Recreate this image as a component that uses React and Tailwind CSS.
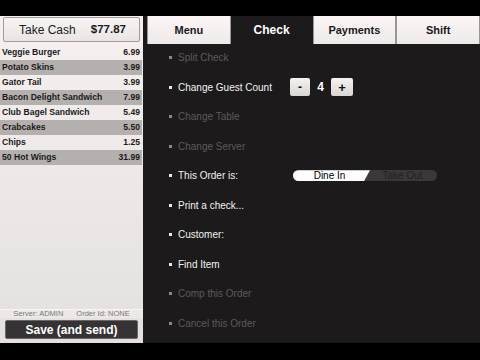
const items = [
  { name: 'Veggie Burger', price: '6.99' },
  { name: 'Potato Skins', price: '3.99' },
  { name: 'Gator Tail', price: '3.99' },
  { name: 'Bacon Delight Sandwich', price: '7.99' },
  { name: 'Club Bagel Sandwich', price: '5.49' },
  { name: 'Crabcakes', price: '5.50' },
  { name: 'Chips', price: '1.25' },
  { name: '50 Hot Wings', price: '31.99' },
];

const actions = [
  { label: 'Split Check', off: true },
  { label: 'Change Guest Count', guests: true },
  { label: 'Change Table', off: true },
  { label: 'Change Server', off: true },
  { label: 'This Order is:', orderType: true },
  { label: 'Print a check...' },
  { label: 'Customer:' },
  { label: 'Find Item' },
  { label: 'Comp this Order', off: true },
  { label: 'Cancel this Order', off: true },
];

function Tab({ label, active }) {
  return (
    <div
      className={
        active
          ? 'flex-1 flex items-center justify-center bg-[#1c1a1a] text-white text-[12px] font-bold'
          : 'flex-1 flex items-center justify-center bg-gradient-to-b from-[#fbf6f5] to-[#efeaea] border-x border-[#9a9696] text-[#1a1a1a] text-[11px] font-bold'
      }
    >
      {label}
    </div>
  );
}

function GuestCount() {
  return (
    <div className="ml-[19px] flex items-center">
      <button className="w-[20px] h-[18px] bg-gradient-to-b from-[#f6f2f1] to-[#d9d5d4] rounded-[2px] text-[#111] text-[12px] font-bold leading-none">
        -
      </button>
      <span className="w-[21px] text-center text-white text-[12px] font-bold">4</span>
      <button className="w-[22px] h-[18px] bg-gradient-to-b from-[#f6f2f1] to-[#d9d5d4] rounded-[2px] text-[#111] text-[13px] font-bold leading-none">
        +
      </button>
    </div>
  );
}

function OrderType() {
  return (
    <div className="ml-[22px] w-[144px] h-[11px] flex rounded-full overflow-hidden bg-[#3a3838] text-[10px] leading-[11px]">
      <div className="w-[77px] bg-white text-black text-center [clip-path:polygon(0_0,100%_0,calc(100%-6px)_100%,0_100%)] pr-[4px]">
        Dine In
      </div>
      <div className="flex-1 text-[#222] text-center -ml-[2px]">Take Out</div>
    </div>
  );
}

export default function App() {
  return (
    <div className="w-[480px] h-[360px] bg-black flex flex-col font-['Liberation_Sans',Arial,sans-serif] overflow-hidden">
      <div className="h-[16px] shrink-0" />
      <div className="flex h-[327px]">
        {/* Check panel */}
        <aside className="w-[143px] flex flex-col bg-gradient-to-b from-[#f6f1f0] to-[#e4e0df]">
          <button className="mx-[3px] mt-[1px] h-[25px] flex items-center justify-between pl-[15px] pr-[13px] bg-gradient-to-b from-[#f8f4f3] to-[#e9e5e4] border border-[#a09c9b] rounded-[2px] text-[#1a1a1a]">
            <span className="text-[12px]">Take Cash</span>
            <span className="text-[11.5px] font-bold">$77.87</span>
          </button>
          <div className="mt-[3px] pr-[1px]">
            {items.map((it, i) => (
              <div
                key={it.name}
                className={
                  'h-[15px] flex items-center justify-between px-[2px] text-[8.6px] font-bold text-[#1a1a1a] ' +
                  (i % 2 ? 'bg-[#b4b0ae]' : '')
                }
              >
                <span>{it.name}</span>
                <span>{it.price}</span>
              </div>
            ))}
          </div>
          <div className="flex-1" />
          <div className="h-[9px] flex items-center justify-center gap-[13px] text-[7.5px] text-[#7c7878] bg-[#ece8e7] border-t border-[#f8f5f4]">
            <span>Server: ADMIN</span>
            <span>Order Id: NONE</span>
          </div>
          <button className="mx-[5px] mt-[2px] mb-[4px] h-[19px] bg-[#353333] border border-[#6a6666] rounded-[2px] text-white text-[12px] font-bold">
            Save (and send)
          </button>
        </aside>

        {/* Actions panel */}
        <section className="flex-1 flex flex-col bg-[#1c1a1a]">
          <div className="h-[28px] flex pl-[4px] bg-[#1c1a1a]">
            <Tab label="Menu" />
            <Tab label="Check" active />
            <Tab label="Payments" />
            <Tab label="Shift" />
          </div>
          <ul className="flex flex-col -mt-[1px]">
            {actions.map((a) => (
              <li key={a.label} className="h-[29.5px] flex items-center pl-[26px]">
                <span className={'w-[3px] h-[3px] mr-[6px] ' + (a.off ? 'bg-[#8a8888]' : 'bg-[#e8e8e8]')} />
                <span className={'text-[10px] w-[93px] whitespace-nowrap ' + (a.off ? 'text-[#5c5a5a]' : 'text-[#f2f2f2]')}>
                  {a.label}
                </span>
                {a.guests && <GuestCount />}
                {a.orderType && <OrderType />}
              </li>
            ))}
          </ul>
        </section>
      </div>
    </div>
  );
}
